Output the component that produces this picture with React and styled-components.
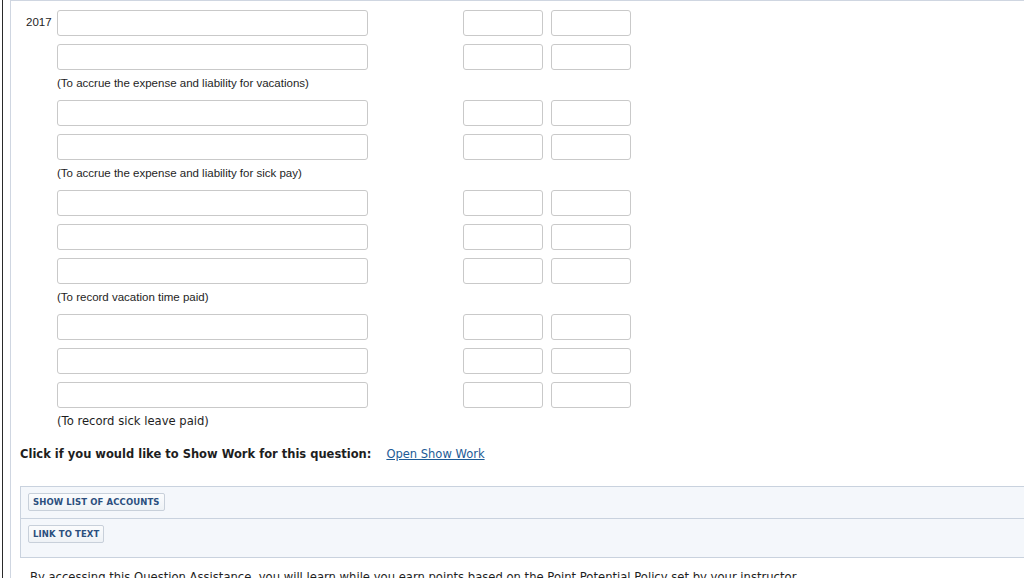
import React from "react";
import styled, { createGlobalStyle } from "styled-components";

const GlobalStyle = createGlobalStyle`
  html, body {
    margin: 0;
    padding: 0;
    background: #ffffff;
    overflow: hidden;
  }
  body {
    font-family: "DejaVu Sans", Verdana, sans-serif;
    color: #1e1e1e;
  }
`;

const Page = styled.div`
  margin-left: 2px;
  border-left: 1px solid #2a2a2a;
  height: 578px;
  overflow: hidden;
`;

const Frame = styled.div`
  margin-left: 7px;
  width: 1100px;
  border-left: 1px solid #cfd6e1;
  border-top: 1px solid #cfd6e1;
  padding: 9px 0 0 9px;
  height: 100%;
  box-sizing: border-box;
`;

const Entries = styled.div`
  display: flex;
  flex-direction: column;
  gap: 8px;
`;

const Row = styled.div`
  display: flex;
  align-items: center;
  height: 26px;
`;

const YearCell = styled.div`
  width: 37px;
  box-sizing: border-box;
  padding-left: 6px;
  margin-top: -3px;
  font-family: "Liberation Sans", Arial, sans-serif;
  font-size: 11.5px;
`;

const AccountInput = styled.input`
  width: 311px;
  height: 26px;
  box-sizing: border-box;
  border: 1px solid #c9c9c9;
  border-radius: 3px;
  background: #fff;
  margin: 0;
`;

const AmountInput = styled.input`
  width: 80px;
  height: 26px;
  box-sizing: border-box;
  border: 1px solid #c9c9c9;
  border-radius: 3px;
  background: #fff;
  margin: 0 0 0 ${(p) => p.$gap}px;
`;

const Note = styled.div`
  padding-left: 37px;
  height: 14px;
  line-height: 11px;
  font-family: ${(p) =>
    p.$wide ? `"DejaVu Sans", Verdana, sans-serif` : `"Liberation Sans", Arial, sans-serif`};
  font-size: ${(p) => (p.$wide ? "11.6px" : "11.5px")};
`;

const ShowWork = styled.div`
  margin-top: 17px;
  height: 15px;
  line-height: 15px;
  font-size: 11.5px;
  display: flex;
`;

const ShowWorkLabel = styled.span`
  font-weight: bold;
  margin-right: 15px;
`;

const Link = styled.a`
  color: #1d5b96;
  text-decoration: underline;
  cursor: pointer;
`;

const Panel = styled.div`
  margin-top: 24px;
  border: 1px solid #c9d2de;
  background: #f4f7fb;
`;

const PanelSection = styled.div`
  padding: 6px 7px ${(p) => p.$bottom}px;
  border-top: ${(p) => (p.$divider ? "1px solid #c9d2de" : "none")};
`;

const ToolButton = styled.button`
  height: 18px;
  padding: 0 4px;
  margin: 0;
  border: 1px solid #c8d0da;
  border-radius: 2px;
  background: linear-gradient(#fbfcfd, #eef2f6);
  color: #2b4f7e;
  font-family: "DejaVu Sans", Verdana, sans-serif;
  font-weight: bold;
  font-size: 8.5px;
  letter-spacing: 0.1px;
  line-height: 16px;
  display: block;
`;

const Disclaimer = styled.p`
  margin: 12px 0 0 10px;
  font-size: 11.6px;
  line-height: 15px;
  white-space: nowrap;
`;

const groups = [
  { rows: 2, note: "(To accrue the expense and liability for vacations)" },
  { rows: 2, note: "(To accrue the expense and liability for sick pay)" },
  { rows: 3, note: "(To record vacation time paid)" },
  { rows: 3, note: "(To record sick leave paid)", wide: true },
];

const EntryRow = ({ year }) => (
  <Row>
    <YearCell>{year}</YearCell>
    <AccountInput type="text" />
    <AmountInput type="text" $gap={95} />
    <AmountInput type="text" $gap={8} />
  </Row>
);

const App = () => {
  let first = true;
  return (
    <>
      <GlobalStyle />
      <Page>
        <Frame>
          <Entries>
            {groups.map((g, gi) => (
              <React.Fragment key={gi}>
                {Array.from({ length: g.rows }).map((_, ri) => {
                  const year = first ? "2017" : "";
                  first = false;
                  return <EntryRow key={ri} year={year} />;
                })}
                <Note $wide={g.wide}>{g.note}</Note>
              </React.Fragment>
            ))}
          </Entries>
          <ShowWork>
            <ShowWorkLabel>Click if you would like to Show Work for this question:</ShowWorkLabel>
            <Link>Open Show Work</Link>
          </ShowWork>
          <Panel>
            <PanelSection $bottom={7}>
              <ToolButton>SHOW LIST OF ACCOUNTS</ToolButton>
            </PanelSection>
            <PanelSection $divider $bottom={14}>
              <ToolButton>LINK TO TEXT</ToolButton>
            </PanelSection>
          </Panel>
          <Disclaimer>
            By accessing this Question Assistance, you will learn while you earn points based on the
            Point Potential Policy set by your instructor.
          </Disclaimer>
        </Frame>
      </Page>
    </>
  );
};

export default App;
